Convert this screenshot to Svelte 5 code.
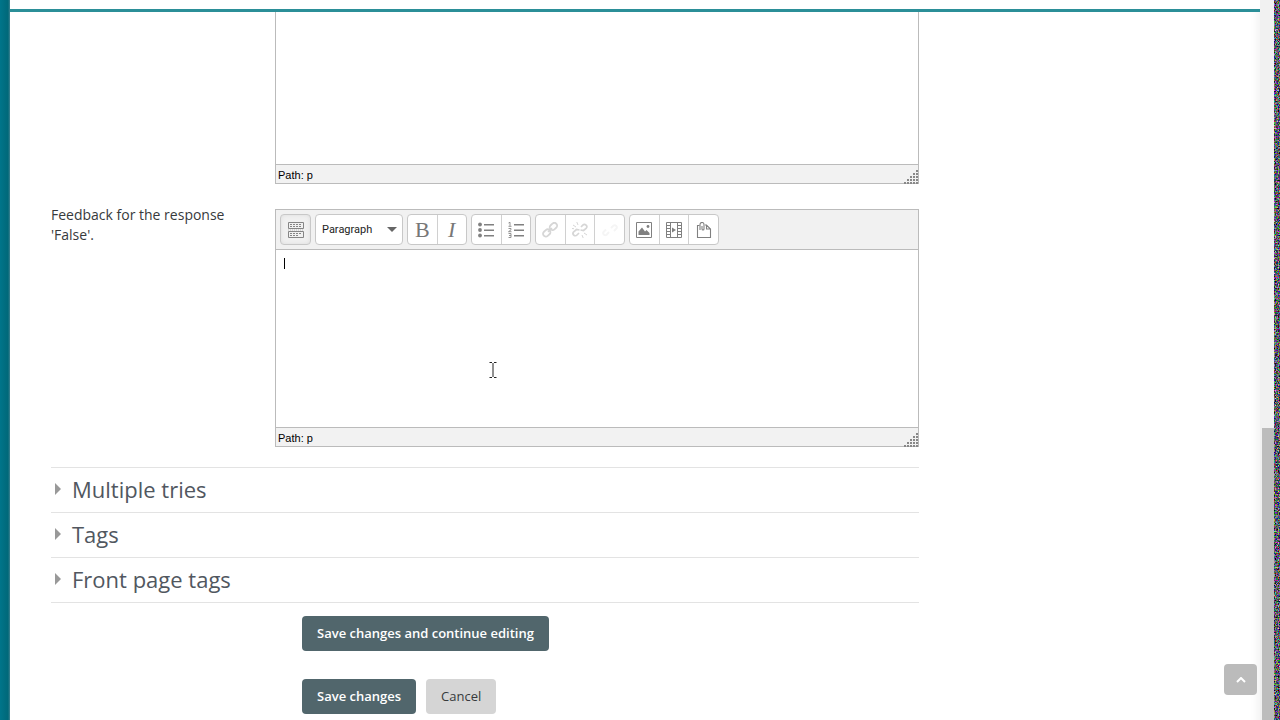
<script>
  const sections = ['Multiple tries', 'Tags', 'Front page tags'];
  let first = $state('');
  let second = $state('');

  const dots = [];
  for (let row = 0; row < 5; row++) {
    for (let col = 4 - row; col < 5; col++) dots.push([col * 3, row * 3]);
  }
</script>

{#snippet status()}
  <div class="status">
    <span>Path: p</span>
    <svg class="grip" viewBox="0 0 14 14" width="14" height="14" aria-hidden="true">
      {#each dots as [x, y]}
        <rect {x} {y} width="2" height="2" fill="#888" />
      {/each}
    </svg>
  </div>
{/snippet}

<div class="shell">
  <div class="edge"></div>
  <div class="page">
    <header></header>
    <main>
      <form onsubmit={(e) => e.preventDefault()}>
        <div class="row">
          <span></span>
          <div class="editor open">
            <textarea class="upper" aria-label="Feedback for the response 'True'." bind:value={first}></textarea>
            {@render status()}
          </div>
        </div>

        <div class="row">
          <label for="feedback-false">Feedback for the response 'False'.</label>
          <div class="editor">
            <div class="toolbar">
              <div class="group single">
                <button type="button" aria-label="Toolbar toggle">
                  <svg viewBox="0 0 16 16" width="16" height="16" fill="none" stroke="#858585">
                    <path d="M.5 .5h15v6H.5zM.5 9.5h15v6H.5z" />
                    <path d="M2 2.5h12M2 11.5h12" stroke-dasharray="2 1" />
                    <path d="M2 4.5h12M2 13.5h9" stroke-dasharray="2 1" />
                    <path d="M0 8h16" stroke="#bbb" stroke-dasharray="1 1" />
                  </svg>
                </button>
              </div>
              <div class="format">
                <select aria-label="Format">
                  <option>Paragraph</option>
                  <option>Heading</option>
                </select>
                <svg viewBox="0 0 10 6" width="10" height="6" aria-hidden="true"><path d="M0 0h10L5 5z" fill="#666" /></svg>
              </div>
              <div class="group">
                <button type="button" class="letter" aria-label="Bold">B</button>
                <button type="button" class="letter italic" aria-label="Italic">I</button>
              </div>
              <div class="group">
                <button type="button" aria-label="Unordered list">
                  <svg viewBox="0 0 16 16" width="16" height="16" fill="#808080">
                    <circle cx="2" cy="2.5" r="1.9" /><circle cx="2" cy="8" r="1.9" /><circle cx="2" cy="13.5" r="1.9" />
                    <path d="M6 2h10v1.5H6zM6 7.5h10V9H6zM6 13h10v1.5H6z" />
                  </svg>
                </button>
                <button type="button" aria-label="Ordered list">
                  <svg viewBox="0 0 16 16" width="16" height="16" fill="#808080">
                    <path d="M6 2h10v1.5H6zM6 7.5h10V9H6zM6 13h10v1.5H6z" />
                    <path d="M.5 1L2 .2v3.6M.5 4.3h3M.5 6.5h2.5v1.3L.5 9.7h3M.5 11.5h2.5v4H.5M1 13.5h2" fill="none" stroke="#888" stroke-width=".9" />
                  </svg>
                </button>
              </div>
              <div class="group triple">
                <button type="button" disabled aria-label="Link">
                  <svg viewBox="0 0 16 16" width="16" height="16" fill="none" stroke="#d6d6d6" stroke-width="1.8">
                    <rect x="-3.7" y="-2.8" width="8" height="5.6" rx="2.8" transform="translate(4.5 11.2) rotate(-42)" />
                    <rect x="-3.7" y="-2.8" width="8" height="5.6" rx="2.8" transform="translate(11.2 4.7) rotate(-42)" />
                    <path d="M6 10l4-4" stroke-width="1.5" />
                  </svg>
                </button>
                <button type="button" disabled aria-label="Unlink">
                  <svg viewBox="0 0 16 16" width="16" height="16" fill="none" stroke="#d6d6d6" stroke-width="1.7">
                    <path d="M9 5l1.8-1.8a2.2 2.2 0 0 1 3.3 3.2L11.5 8.5 8.5 8M7 11l-2 2a2.2 2.2 0 0 1-3.3-3.2L4.5 7.5 7.5 8" />
                    <path d="M1 3l3 2M4.8 0l1.2 3M15 13l-3-2M11.2 16L10 13M0 6.5l2 .2" stroke-width="1" />
                  </svg>
                </button>
                <button type="button" disabled aria-label="Prevent automatic linking">
                  <svg viewBox="0 0 16 16" width="16" height="16" fill="none" stroke="#f5f5f5" stroke-width="2">
                    <path d="M7 10l-2.5 3a2.2 2.2 0 0 1-3-3L4 7.5M9 6l2.5-2.5a2.2 2.2 0 0 1 3 3L12 9" />
                  </svg>
                </button>
              </div>
              <div class="group triple">
                <button type="button" aria-label="Image">
                  <svg viewBox="0 0 16 16" width="16" height="16">
                    <path d="M.5 .5h15v15H.5z" fill="none" stroke="#808080" />
                    <path d="M2.5 13V9.5L6 5.5l3 4 1.5-1.5 3 3v2z" fill="#808080" /><circle cx="12" cy="4.5" r="1.4" fill="#808080" />
                  </svg>
                </button>
                <button type="button" aria-label="Moodle media">
                  <svg viewBox="0 0 16 16" width="16" height="16">
                    <path d="M.5 .5h15v15H.5zM4.5 .5v15M11.5 .5v15M.5 3.5h4M.5 6.5h4M.5 9.5h4M.5 12.5h4M11.5 3.5h4M11.5 6.5h4M11.5 9.5h4M11.5 12.5h4" fill="none" stroke="#808080" />
                    <path d="M6 5.5l4 2.5-4 2.5z" fill="#808080" />
                  </svg>
                </button>
                <button type="button" aria-label="Manage embedded files">
                  <svg viewBox="0 0 16 16" width="16" height="16" fill="none" stroke="#808080" stroke-width="1.1">
                    <path d="M3.5 3.5h-2v12h13V7l-4-4H9M10.5 3v4h4" />
                    <path d="M4 8V2.5A2 2 0 0 1 8 2.5V7a1 1 0 0 1-2 0V4" />
                  </svg>
                </button>
              </div>
            </div>
            <div class="field">
              <textarea class="lower" id="feedback-false" bind:value={second}></textarea>
              <i class="caret"></i>
              <svg class="pointer" viewBox="0 0 8 16" width="8" height="16" aria-hidden="true">
                <path d="M.5 .5H3M5 .5h2.5M.5 15.5H3M5 15.5h2.5M4 1v14" fill="none" stroke="#222" />
              </svg>
            </div>
            {@render status()}
          </div>
        </div>

        <div class="sections">
          {#each sections as title}
            <h2>
              <a href="#section">
                <svg viewBox="0 0 6 12" width="6" height="12" aria-hidden="true"><path d="M0 0l6 6-6 6z" fill="#999" /></svg>
                {title}
              </a>
            </h2>
          {/each}
        </div>

        <div class="actions">
          <div><button class="btn" type="submit">Save changes and continue editing</button></div>
          <div>
            <button class="btn" type="submit">Save changes</button>
            <button class="btn plain" type="button">Cancel</button>
          </div>
        </div>
      </form>
    </main>
    <button class="top" type="button" aria-label="Back to top">
      <svg viewBox="0 0 10 6" width="10" height="6"><path d="M1 5l4-4 4 4" fill="none" stroke="#fff" stroke-width="2" /></svg>
    </button>
  </div>
  <div class="scroll"><div class="before"></div><div class="thumb"></div></div>
  <svg class="noise" aria-hidden="true">
    <filter id="grain" x="0" y="0" width="100%" height="100%" color-interpolation-filters="sRGB">
      <feTurbulence type="fractalNoise" baseFrequency="0.71" numOctaves="3" seed="7" />
      <feColorMatrix values="2 0 0 0 -.65  .3 1.8 0 0 -.7  .3 0 1.8 0 -.65  0 0 0 0 1" />
    </filter>
    <rect width="100%" height="100%" filter="url(#grain)" />
  </svg>
</div>

<style>
  :global(body) { background: #fff; overflow: hidden; }
  * { box-sizing: border-box; }
  .shell { display: flex; height: 100vh; overflow: hidden; font-family: "Open Sans", sans-serif; font-size: 14px; color: #373a3c; }
  .edge { width: 10px; background: linear-gradient(90deg, #00758a, #006879 80%, #3f8290); flex: none; }
  .page { position: relative; flex: 1; min-width: 0; overflow: hidden; }
  header { height: 12px; border-bottom: 3px solid #2b8f98; background: #fff; }
  main { padding: 0 41px; box-shadow: inset -10px 0 10px -8px #f0f0f0; min-height: 100%; }
  form { max-width: 868px; }
  .row { display: grid; grid-template-columns: 224px minmax(0, 1fr); margin-bottom: 25px; }
  label { width: 180px; margin-top: -4px; line-height: 20px; align-self: start; }
  .editor { border: 1px solid #bbb; background: #fff; }
  .open { border-top: 0; }
  textarea { display: block; width: 100%; border: 0; padding: 8px; resize: none; outline: none; background: transparent; font: 14px "Open Sans", sans-serif; }
  .upper { height: 152px; }
  .lower { height: 177px; }
  .status { position: relative; height: 19px; border-top: 1px solid #bbb; background: #f2f2f2; padding: 0 2px; font: 11px/20px "Liberation Sans", Arial, sans-serif; color: #000; }
  .grip { position: absolute; right: 0; bottom: -1px; }
  .toolbar { display: flex; gap: 4px; padding: 4px; height: 40px; border-bottom: 1px solid #bbb; background: #f1f1f1; }
  .group, .format { display: flex; height: 31px; border: 1px solid #c8c8c8; border-radius: 4px; background: #fff; overflow: hidden; }
  .group { width: 60px; }
  .group button { flex: 1; padding: 0; border: 0; background: none; display: grid; place-items: center; }
  .group button + button { border-left: 1px solid #d0d0d0; }
  .single { width: 31px; background: #f0f0f0; box-shadow: inset 0 0 4px #ddd; }
  .triple { width: 90px; }
  .format { position: relative; width: 88px; }
  .format select { appearance: none; width: 100%; border: 0; background: none; padding: 0 6px; font: 11px Roboto, sans-serif; color: #222; }
  .format svg { position: absolute; right: 5px; top: 12px; pointer-events: none; }
  .group .letter { font: 22px/30px "Liberation Serif", serif; color: #777; }
  .group .italic { font-style: italic; }
  .field { position: relative; }
  .caret { position: absolute; left: 8px; top: 8px; width: 1px; height: 11px; background: #000; }
  .pointer { position: absolute; left: 213px; top: 112px; }
  .sections { border-top: 1px solid #e3e3e3; margin-top: -5px; }
  h2 { margin: 0; height: 45px; border-bottom: 1px solid #e3e3e3; font-size: 22px; font-weight: 400; line-height: 42px; }
  h2 a { display: flex; align-items: center; gap: 11px; padding-left: 4px; color: #51575f; text-decoration: none; }
  .actions { display: grid; gap: 28px; padding: 13px 0 0 251px; }
  .actions div { display: flex; gap: 10px; }
  .btn { height: 35px; padding: 0 15px 1px; border: 0; border-radius: 4px; background: #51666c; color: #fff; font: 600 13px "Open Sans", sans-serif; }
  .plain { background: #d5d5d5; color: #373a3c; font-weight: 400; }
  .top { position: absolute; right: 3px; bottom: 25px; width: 33px; height: 31px; padding: 0; border: 0; border-radius: 4px; background: #bbb; display: grid; place-items: center; }
  .scroll { flex: none; width: 14px; display: flex; flex-direction: column; background: #f1f1f1; padding-left: 2px; }
  .before { flex: 428; }
  .thumb { flex: 292; background: #bcbcbc; }
  .noise { flex: none; width: 6px; height: 100%; }
</style>
